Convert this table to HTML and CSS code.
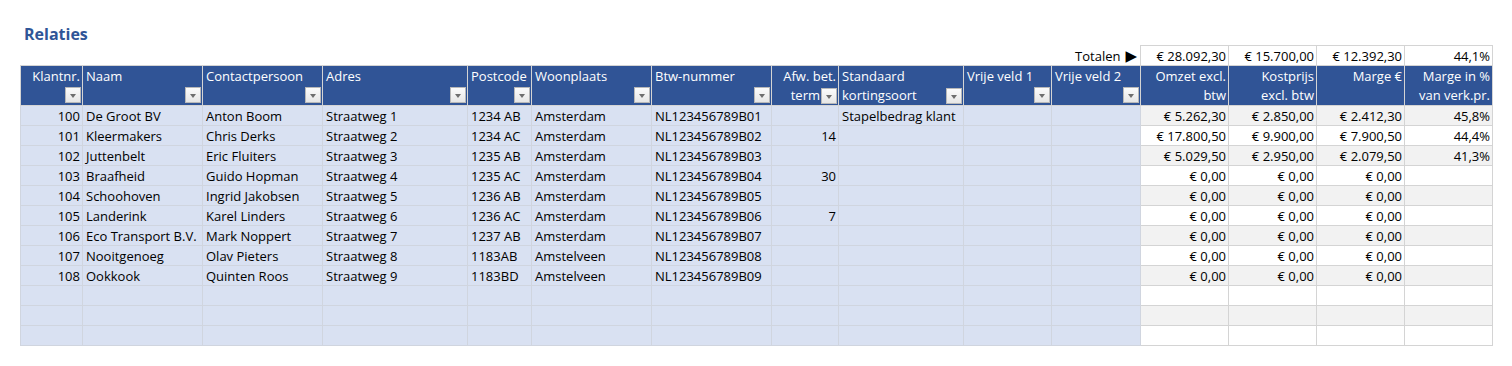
FILE: index.html
```html
<!DOCTYPE html>
<html lang="nl">
<head>
<meta charset="utf-8">
<title>Relaties</title>
<link rel="stylesheet" href="styles.css">
</head>
<body>
<div class="sheet">
  <h1 class="title">Relaties</h1>
  <table class="grid">
    <colgroup>
      <col class="w62"><col class="w120"><col class="w120"><col class="w145"><col class="w64"><col class="w120"><col class="w120"><col class="w67"><col class="w125"><col class="w88"><col class="w89"><col class="w88"><col class="w88"><col class="w88"><col class="w88">
    </colgroup>
    <thead>
      <tr class="totals">
        <td class="blank" colspan="11"><span class="tot-label">Totalen<span class="arrow">&#9654;</span></span></td>
        <td class="num tcell">€ 28.092,30</td>
        <td class="num tcell">€ 15.700,00</td>
        <td class="num tcell">€ 12.392,30</td>
        <td class="num tcell">44,1%</td>
      </tr>
      <tr class="head">
        <th><div class="hc right"><div class="l1">Klantnr.</div><div class="l2"><span class="fb"></span></div></div></th>
        <th><div class="hc"><div class="l1">Naam</div><div class="l2"><span class="fb"></span></div></div></th>
        <th><div class="hc"><div class="l1">Contactpersoon</div><div class="l2"><span class="fb"></span></div></div></th>
        <th><div class="hc"><div class="l1">Adres</div><div class="l2"><span class="fb"></span></div></div></th>
        <th><div class="hc"><div class="l1">Postcode</div><div class="l2"><span class="fb"></span></div></div></th>
        <th><div class="hc"><div class="l1">Woonplaats</div><div class="l2"><span class="fb"></span></div></div></th>
        <th><div class="hc"><div class="l1">Btw-nummer</div><div class="l2"><span class="fb"></span></div></div></th>
        <th><div class="hc right"><div class="l1">Afw. bet.</div><div class="l2"><span class="t2">term</span><span class="fb"></span></div></div></th>
        <th><div class="hc"><div class="l1">Standaard</div><div class="l2 split"><span class="t2">kortingsoort</span><span class="fb"></span></div></div></th>
        <th><div class="hc"><div class="l1">Vrije veld 1</div><div class="l2"><span class="fb"></span></div></div></th>
        <th><div class="hc"><div class="l1">Vrije veld 2</div><div class="l2"><span class="fb"></span></div></div></th>
        <th><div class="hc right"><div class="l1">Omzet excl.</div><div class="l2"><span class="t2">btw</span></div></div></th>
        <th><div class="hc right"><div class="l1">Kostprijs</div><div class="l2"><span class="t2">excl. btw</span></div></div></th>
        <th><div class="hc right"><div class="l1">Marge €</div><div class="l2"></div></div></th>
        <th><div class="hc right"><div class="l1">Marge in %</div><div class="l2"><span class="t2">van verk.pr.</span></div></div></th>
      </tr>
    </thead>
    <tbody>
      <tr class="alt">
        <td class="num b">100</td><td class="b">De Groot BV</td><td class="b">Anton Boom</td><td class="b">Straatweg 1</td><td class="b">1234 AB</td><td class="b">Amsterdam</td><td class="b">NL123456789B01</td><td class="b num"></td><td class="b">Stapelbedrag klant</td><td class="b"></td><td class="b"></td>
        <td class="num c">€ 5.262,30</td><td class="num c">€ 2.850,00</td><td class="num c">€ 2.412,30</td><td class="num c">45,8%</td>
      </tr>
      <tr>
        <td class="num b">101</td><td class="b">Kleermakers</td><td class="b">Chris Derks</td><td class="b">Straatweg 2</td><td class="b">1234 AC</td><td class="b">Amsterdam</td><td class="b">NL123456789B02</td><td class="b num">14</td><td class="b"></td><td class="b"></td><td class="b"></td>
        <td class="num c">€ 17.800,50</td><td class="num c">€ 9.900,00</td><td class="num c">€ 7.900,50</td><td class="num c">44,4%</td>
      </tr>
      <tr class="alt">
        <td class="num b">102</td><td class="b">Juttenbelt</td><td class="b">Eric Fluiters</td><td class="b">Straatweg 3</td><td class="b">1235 AB</td><td class="b">Amsterdam</td><td class="b">NL123456789B03</td><td class="b num"></td><td class="b"></td><td class="b"></td><td class="b"></td>
        <td class="num c">€ 5.029,50</td><td class="num c">€ 2.950,00</td><td class="num c">€ 2.079,50</td><td class="num c">41,3%</td>
      </tr>
      <tr>
        <td class="num b">103</td><td class="b">Braafheid</td><td class="b">Guido Hopman</td><td class="b">Straatweg 4</td><td class="b">1235 AC</td><td class="b">Amsterdam</td><td class="b">NL123456789B04</td><td class="b num">30</td><td class="b"></td><td class="b"></td><td class="b"></td>
        <td class="num c">€ 0,00</td><td class="num c">€ 0,00</td><td class="num c">€ 0,00</td><td class="num c"></td>
      </tr>
      <tr class="alt">
        <td class="num b">104</td><td class="b">Schoohoven</td><td class="b">Ingrid Jakobsen</td><td class="b">Straatweg 5</td><td class="b">1236 AB</td><td class="b">Amsterdam</td><td class="b">NL123456789B05</td><td class="b num"></td><td class="b"></td><td class="b"></td><td class="b"></td>
        <td class="num c">€ 0,00</td><td class="num c">€ 0,00</td><td class="num c">€ 0,00</td><td class="num c"></td>
      </tr>
      <tr>
        <td class="num b">105</td><td class="b">Landerink</td><td class="b">Karel Linders</td><td class="b">Straatweg 6</td><td class="b">1236 AC</td><td class="b">Amsterdam</td><td class="b">NL123456789B06</td><td class="b num">7</td><td class="b"></td><td class="b"></td><td class="b"></td>
        <td class="num c">€ 0,00</td><td class="num c">€ 0,00</td><td class="num c">€ 0,00</td><td class="num c"></td>
      </tr>
      <tr class="alt">
        <td class="num b">106</td><td class="b">Eco Transport B.V.</td><td class="b">Mark Noppert</td><td class="b">Straatweg 7</td><td class="b">1237 AB</td><td class="b">Amsterdam</td><td class="b">NL123456789B07</td><td class="b num"></td><td class="b"></td><td class="b"></td><td class="b"></td>
        <td class="num c">€ 0,00</td><td class="num c">€ 0,00</td><td class="num c">€ 0,00</td><td class="num c"></td>
      </tr>
      <tr>
        <td class="num b">107</td><td class="b">Nooitgenoeg</td><td class="b">Olav Pieters</td><td class="b">Straatweg 8</td><td class="b">1183AB</td><td class="b">Amstelveen</td><td class="b">NL123456789B08</td><td class="b num"></td><td class="b"></td><td class="b"></td><td class="b"></td>
        <td class="num c">€ 0,00</td><td class="num c">€ 0,00</td><td class="num c">€ 0,00</td><td class="num c"></td>
      </tr>
      <tr class="alt">
        <td class="num b">108</td><td class="b">Ookkook</td><td class="b">Quinten Roos</td><td class="b">Straatweg 9</td><td class="b">1183BD</td><td class="b">Amstelveen</td><td class="b">NL123456789B09</td><td class="b num"></td><td class="b"></td><td class="b"></td><td class="b"></td>
        <td class="num c">€ 0,00</td><td class="num c">€ 0,00</td><td class="num c">€ 0,00</td><td class="num c"></td>
      </tr>
      <tr>
        <td class="b"></td><td class="b"></td><td class="b"></td><td class="b"></td><td class="b"></td><td class="b"></td><td class="b"></td><td class="b"></td><td class="b"></td><td class="b"></td><td class="b"></td>
        <td class="c"></td><td class="c"></td><td class="c"></td><td class="c"></td>
      </tr>
      <tr class="alt">
        <td class="b"></td><td class="b"></td><td class="b"></td><td class="b"></td><td class="b"></td><td class="b"></td><td class="b"></td><td class="b"></td><td class="b"></td><td class="b"></td><td class="b"></td>
        <td class="c"></td><td class="c"></td><td class="c"></td><td class="c"></td>
      </tr>
      <tr>
        <td class="b"></td><td class="b"></td><td class="b"></td><td class="b"></td><td class="b"></td><td class="b"></td><td class="b"></td><td class="b"></td><td class="b"></td><td class="b"></td><td class="b"></td>
        <td class="c"></td><td class="c"></td><td class="c"></td><td class="c"></td>
      </tr>
    </tbody>
  </table>
</div>
</body>
</html>
```

FILE: styles.css
```css
* { box-sizing: border-box; }

html, body {
  margin: 0;
  padding: 0;
  background: #ffffff;
}

body {
  font-family: "Open Sans", "Noto Sans", "Liberation Sans", sans-serif;
  font-size: 13px;
  color: #000000;
}

.sheet {
  padding: 24px 0 0 20px;
}

.title {
  margin: 0 0 1px 4px;
  font-size: 16px;
  line-height: 20px;
  font-weight: 700;
  color: #2F5597;
}

.grid {
  border-collapse: collapse;
  table-layout: fixed;
  width: 1472px;
}

.w62 { width: 62px; }
.w64 { width: 64px; }
.w67 { width: 67px; }
.w88 { width: 88px; }
.w89 { width: 89px; }
.w120 { width: 120px; }
.w125 { width: 125px; }
.w145 { width: 145px; }

td, th {
  height: 20px;
  padding: 0 3px;
  line-height: 17px;
  white-space: nowrap;
  overflow: hidden;
  vertical-align: bottom;
  font-weight: 400;
  text-align: left;
}

.num { text-align: right; padding-right: 2px; }

/* totals row */
.totals .blank {
  border: none;
  text-align: right;
  padding-right: 3px;
}
.tot-label { color: #000; }
.arrow {
  font-family: "DejaVu Sans", sans-serif;
  font-size: 15px;
  margin-left: 5px;
}
.tcell {
  border: 1px solid #D4D4D4;
  background: #ffffff;
}

/* header */
.head th {
  height: 40px;
  padding: 0;
  background: #305496;
  color: #ffffff;
  border: 1px solid #D4D4D4;
  vertical-align: top;
}
.hc {
  display: flex;
  flex-direction: column;
  height: 39px;
}
.hc .l1 {
  height: 20px;
  line-height: 20px;
  padding: 0 3px;
}
.hc.right .l1 { text-align: right; padding-right: 2px; }
.hc .l2 {
  flex: 1;
  display: flex;
  justify-content: flex-end;
  align-items: flex-end;
  padding: 0 1px 2px 3px;
}
.hc.right .l2 { padding-right: 2px; }
.hc .l2.split { justify-content: space-between; padding-right: 1px; }
.hc .t2 { line-height: 18px; }
.hc .l2 .fb { margin-left: 1px; }
.hc.right .l2:has(.fb) { padding-right: 1px; }

.fb {
  display: inline-block;
  width: 16px;
  height: 16px;
  background: linear-gradient(#fbfbfb, #e6e6e6);
  border: 1px solid #b8b8b8;
  position: relative;
  flex: none;
}
.fb::after {
  content: "";
  position: absolute;
  left: 4px;
  top: 6px;
  border-left: 3.5px solid transparent;
  border-right: 3.5px solid transparent;
  border-top: 4px solid #6e6e6e;
}

/* body cells */
.b {
  background: #D9E1F2;
  border: 1px solid #D0D5DF;
}
.c {
  background: #ffffff;
  border: 1px solid #D4D4D4;
}
.alt .c { background: #F2F2F2; }
```
